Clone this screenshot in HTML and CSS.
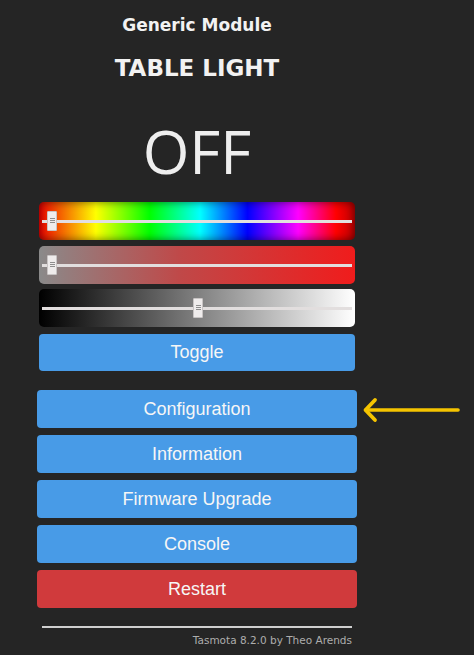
FILE: index.html
```html
<!DOCTYPE html>
<html>
<head>
<meta charset="utf-8">
<link rel="stylesheet" href="styles.css">
</head>
<body>
<div class="page">
  <div class="wrap">
    <div class="module">Generic Module</div>
    <div class="device">TABLE LIGHT</div>
    <div class="state">OFF</div>

    <div class="slider hue">
      <div class="track"><span class="thumb" style="left:5px"><i></i></span></div>
    </div>
    <div class="slider sat">
      <div class="track"><span class="thumb" style="left:5px"><i></i></span></div>
    </div>
    <div class="slider dim">
      <div class="track"><span class="thumb" style="left:151px"><i></i></span></div>
    </div>

    <button class="btn toggle">Toggle</button>

    <div class="menu">
      <button class="btn">Configuration</button>
      <button class="btn">Information</button>
      <button class="btn">Firmware Upgrade</button>
      <button class="btn">Console</button>
      <button class="btn red">Restart</button>
    </div>

    <div class="footer">
      <div class="rule"></div>
      <div class="credit">Tasmota 8.2.0 by Theo Arends</div>
    </div>
  </div>

  <svg class="arrow" width="100" height="26" viewBox="0 0 100 26">
    <path d="M4 13 H96" stroke="#f5c400" stroke-width="3.6" stroke-linecap="round" fill="none"/>
    <path d="M13 3 L3.5 13 L13 23" stroke="#f5c400" stroke-width="3.8" stroke-linecap="round" stroke-linejoin="round" fill="none"/>
  </svg>
</div>
</body>
</html>
```

FILE: styles.css
```css
html, body {
  margin: 0;
  padding: 0;
  background: #252525;
}

.page {
  position: relative;
  width: 474px;
  height: 655px;
  overflow: hidden;
  background: #252525;
}

.wrap {
  width: 320px;
  margin-left: 37px;
  padding-top: 15px;
  display: flex;
  flex-direction: column;
}

.module {
  font-family: "DejaVu Sans", Verdana, sans-serif;
  font-weight: bold;
  font-size: 17px;
  line-height: 20px;
  color: #f2f2f2;
  text-align: center;
}

.device {
  margin-top: 20px;
  font-family: "DejaVu Sans", Verdana, sans-serif;
  font-weight: bold;
  font-size: 23px;
  line-height: 26px;
  color: #f2f2f2;
  text-align: center;
}

.state {
  margin-top: 36px;
  font-family: "Open Sans", "Liberation Sans", sans-serif;
  font-size: 60px;
  line-height: 68px;
  color: #eeeeee;
  text-align: center;
}

.slider {
  margin: 17px 2px 0;
  height: 38px;
  border-radius: 5px;
  display: flex;
  align-items: center;
  padding: 0 3px;
}

.slider + .slider {
  margin-top: 6px;
}

.slider.dim {
  margin-top: 5px;
}

.hue {
  background: linear-gradient(to right, #e00 0%, #ff0 18%, #0f0 35%, #0ff 51%, #00f 66%, #f0f 82%, #f00 94%, #b00 100%);
  box-shadow: inset 0 0 8px rgba(0, 0, 0, 0.55);
}

.sat {
  background: linear-gradient(to right, #8a8a8a 0%, #c04848 45%, #f01c1c 100%);
}

.dim {
  background: linear-gradient(to right, #000 0%, #fff 100%);
}

.track {
  position: relative;
  flex: 1;
  height: 3px;
  background: #e2dede;
}

.thumb {
  position: absolute;
  top: -9px;
  width: 10px;
  height: 20px;
  box-sizing: border-box;
  background: #efecec;
  border: 1px solid #c8c4c4;
  border-radius: 1px;
  display: flex;
  align-items: center;
  justify-content: center;
}

.thumb i {
  display: block;
  width: 5px;
  height: 5px;
  background: repeating-linear-gradient(to bottom, #8e8e8e 0 1px, transparent 1px 2px);
}

.btn {
  display: block;
  width: 100%;
  height: 38px;
  margin: 0;
  padding: 0;
  border: 0;
  border-radius: 4px;
  background: #489be7;
  color: #f6f6f6;
  font-family: "Liberation Sans", Arial, sans-serif;
  font-size: 18px;
  line-height: 38px;
  text-align: center;
}

.toggle {
  width: 316px;
  height: 37px;
  line-height: 37px;
  margin: 7px 2px 0;
}

.menu {
  margin-top: 19px;
  display: flex;
  flex-direction: column;
  gap: 7px;
}

.btn.red {
  background: #d03a3c;
}

.footer {
  margin: 18px 5px 0;
}

.rule {
  height: 2px;
  background: #cfcfcf;
}

.credit {
  margin-top: 5px;
  text-align: right;
  font-family: "DejaVu Sans", Verdana, sans-serif;
  font-size: 10.5px;
  line-height: 14px;
  color: #adadad;
}

.arrow {
  position: absolute;
  left: 362px;
  top: 397px;
}
```
